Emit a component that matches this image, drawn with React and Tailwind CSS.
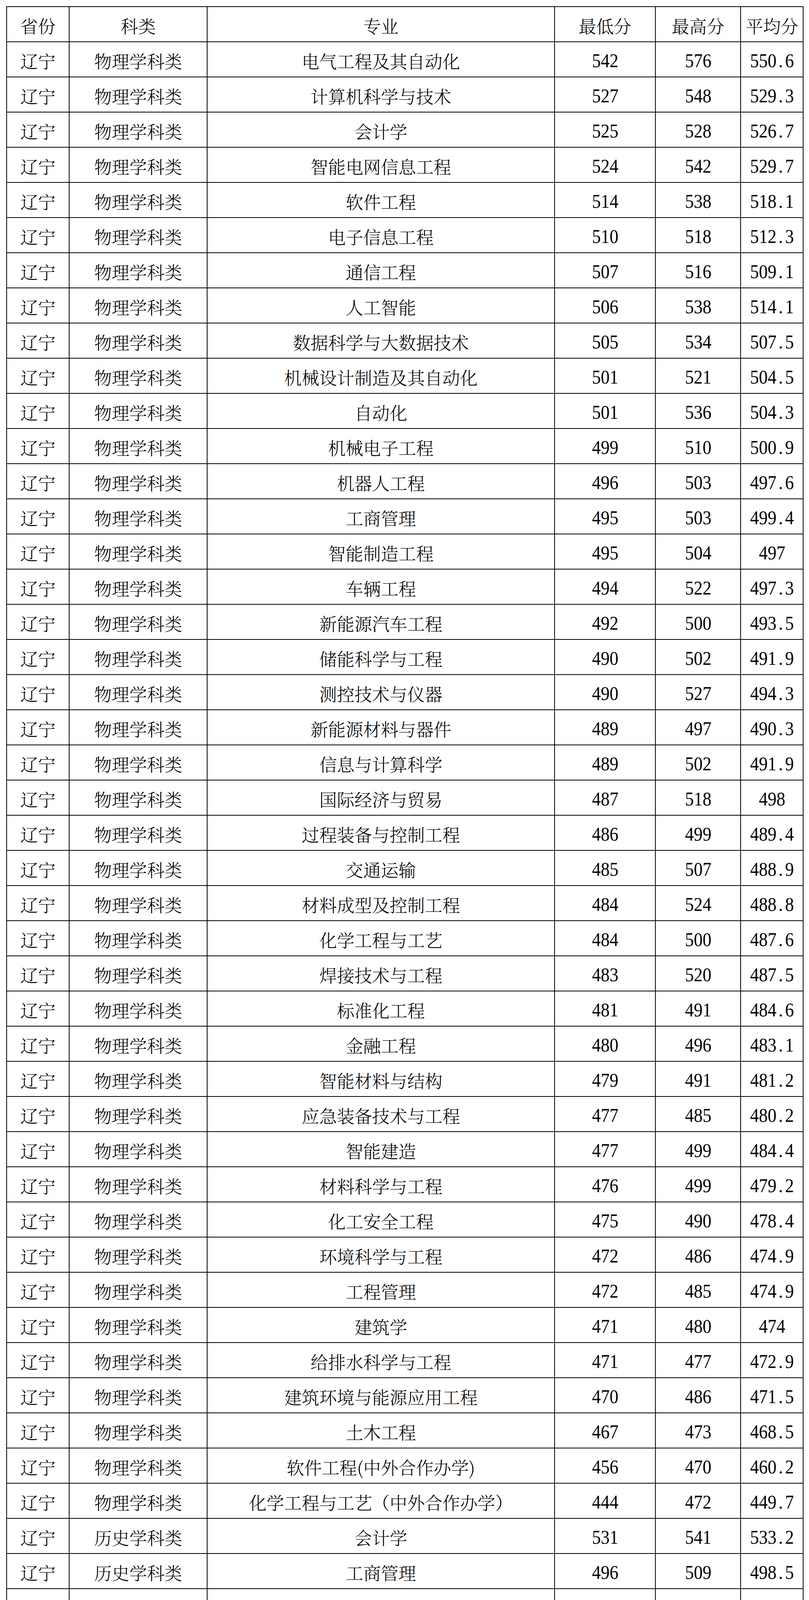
import React from "react";

const rows = [
  ["物理学科类", "电气工程及其自动化", "542", "576", "550.6"],
  ["物理学科类", "计算机科学与技术", "527", "548", "529.3"],
  ["物理学科类", "会计学", "525", "528", "526.7"],
  ["物理学科类", "智能电网信息工程", "524", "542", "529.7"],
  ["物理学科类", "软件工程", "514", "538", "518.1"],
  ["物理学科类", "电子信息工程", "510", "518", "512.3"],
  ["物理学科类", "通信工程", "507", "516", "509.1"],
  ["物理学科类", "人工智能", "506", "538", "514.1"],
  ["物理学科类", "数据科学与大数据技术", "505", "534", "507.5"],
  ["物理学科类", "机械设计制造及其自动化", "501", "521", "504.5"],
  ["物理学科类", "自动化", "501", "536", "504.3"],
  ["物理学科类", "机械电子工程", "499", "510", "500.9"],
  ["物理学科类", "机器人工程", "496", "503", "497.6"],
  ["物理学科类", "工商管理", "495", "503", "499.4"],
  ["物理学科类", "智能制造工程", "495", "504", "497"],
  ["物理学科类", "车辆工程", "494", "522", "497.3"],
  ["物理学科类", "新能源汽车工程", "492", "500", "493.5"],
  ["物理学科类", "储能科学与工程", "490", "502", "491.9"],
  ["物理学科类", "测控技术与仪器", "490", "527", "494.3"],
  ["物理学科类", "新能源材料与器件", "489", "497", "490.3"],
  ["物理学科类", "信息与计算科学", "489", "502", "491.9"],
  ["物理学科类", "国际经济与贸易", "487", "518", "498"],
  ["物理学科类", "过程装备与控制工程", "486", "499", "489.4"],
  ["物理学科类", "交通运输", "485", "507", "488.9"],
  ["物理学科类", "材料成型及控制工程", "484", "524", "488.8"],
  ["物理学科类", "化学工程与工艺", "484", "500", "487.6"],
  ["物理学科类", "焊接技术与工程", "483", "520", "487.5"],
  ["物理学科类", "标准化工程", "481", "491", "484.6"],
  ["物理学科类", "金融工程", "480", "496", "483.1"],
  ["物理学科类", "智能材料与结构", "479", "491", "481.2"],
  ["物理学科类", "应急装备技术与工程", "477", "485", "480.2"],
  ["物理学科类", "智能建造", "477", "499", "484.4"],
  ["物理学科类", "材料科学与工程", "476", "499", "479.2"],
  ["物理学科类", "化工安全工程", "475", "490", "478.4"],
  ["物理学科类", "环境科学与工程", "472", "486", "474.9"],
  ["物理学科类", "工程管理", "472", "485", "474.9"],
  ["物理学科类", "建筑学", "471", "480", "474"],
  ["物理学科类", "给排水科学与工程", "471", "477", "472.9"],
  ["物理学科类", "建筑环境与能源应用工程", "470", "486", "471.5"],
  ["物理学科类", "土木工程", "467", "473", "468.5"],
  ["物理学科类", "软件工程(中外合作办学)", "456", "470", "460.2"],
  ["物理学科类", "化学工程与工艺（中外合作办学）", "444", "472", "449.7"],
  ["历史学科类", "会计学", "531", "541", "533.2"],
  ["历史学科类", "工商管理", "496", "509", "498.5"],
  ["历史学科类", "国际经济与贸易", "492", "519", "497.7"],
  ["历史学科类", "传播学", "492", "509", "496.6"],
  ["历史学科类", "广告学", "488", "499", "491.1"],
  ["历史学科类", "建筑学", "487", "504", "490.8"],
];

const cell =
  "h-[90px] border-r-2 border-b-2 border-black flex items-center justify-center overflow-hidden whitespace-nowrap";

function Cjk({ children }) {
  return (
    <span className="inline-block font-['Noto_Serif_CJK_SC','Noto_Sans_CJK_SC',serif] text-[45px] leading-none font-light translate-y-[3px]">
      {children}
    </span>
  );
}

function Num({ v }) {
  const parts = v.split(".");
  return (
    <span className="inline-block scale-x-[0.9] font-['Liberation_Serif',serif] text-[50px] leading-none translate-y-[3px]">
      {parts[0]}
      {parts.length > 1 && (
        <>
          <span className="mx-[6px]">.</span>
          {parts[1]}
        </>
      )}
    </span>
  );
}

export default function App() {
  return (
    <div className="bg-white w-[2070px] h-[4442px] pt-[16px] pl-[16px] text-black">
      <div className="grid grid-cols-[160px_353px_889px_258px_218px_160px] w-[2040px] border-l-2 border-t-2 border-black">
        {["省份", "科类", "专业", "最低分", "最高分", "平均分"].map((h) => (
          <div key={h} className={cell}>
            <Cjk>{h}</Cjk>
          </div>
        ))}
        {rows.map((r, i) => (
          <React.Fragment key={i}>
            <div className={cell}>
              <Cjk>辽宁</Cjk>
            </div>
            <div className={cell}>
              <Cjk>{r[0]}</Cjk>
            </div>
            <div className={cell}>
              <Cjk>{r[1]}</Cjk>
            </div>
            <div className={cell}>
              <Num v={r[2]} />
            </div>
            <div className={cell}>
              <Num v={r[3]} />
            </div>
            <div className={cell}>
              <Num v={r[4]} />
            </div>
          </React.Fragment>
        ))}
      </div>
    </div>
  );
}
